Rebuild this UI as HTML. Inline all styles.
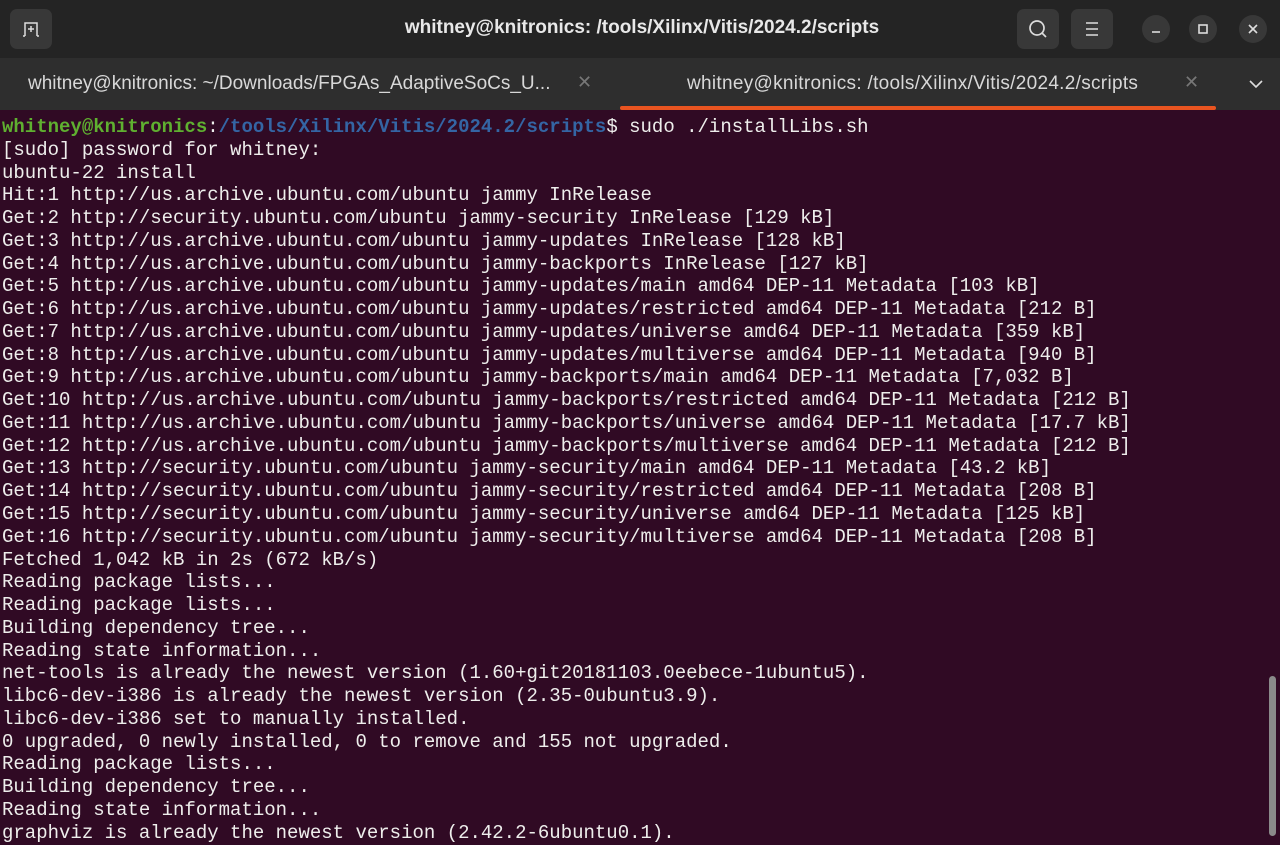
<!DOCTYPE html>
<html><head><meta charset="utf-8"><style>
*{margin:0;padding:0;box-sizing:border-box}
body{width:1280px;height:835px;overflow:hidden;background:#300a24;font-family:"Liberation Sans",sans-serif}
.hdr{position:absolute;left:0;top:0;width:1280px;height:58px;background:#242424}
.title{position:absolute;left:0;width:1284px;top:17px;text-align:center;color:#e8e8e8;font-weight:bold;font-size:19px}
.btn{position:absolute;top:9px;width:42px;height:40px;border-radius:7px;background:#383838}
.circ{position:absolute;top:15px;width:28px;height:28px;border-radius:50%;background:#383838}
.tabs{position:absolute;left:0;top:58px;width:1280px;height:52px;background:#2e2e2e}
.tab{position:absolute;top:15px;color:#d8d8d8;font-size:19px}
.x{position:absolute;top:14px;color:#777;font-size:18px}
.term{position:absolute;left:2px;top:116px;font-family:"Liberation Mono",monospace;font-size:19px;line-height:22.77px;color:#eeeeec;white-space:pre}
.g{font-weight:bold;color:#5fb030}.b{color:#3465a4;font-weight:bold}
</style></head><body>
<div class="hdr">
<div class="btn" style="left:10px"><svg width="42" height="40"><path d="M15 27V14h12v13M15 27h-2M27 27h2M21 17v6M18 20h6" stroke="#ddd" stroke-width="1.5" fill="none"/></svg></div>
<div class="title">whitney@knitronics: /tools/Xilinx/Vitis/2024.2/scripts</div>
<div class="btn" style="left:1017px"><svg width="42" height="40"><circle cx="20" cy="19" r="7" stroke="#ddd" stroke-width="1.7" fill="none"/><path d="M25 24l4 4" stroke="#ddd" stroke-width="1.7"/></svg></div>
<div class="btn" style="left:1071px"><svg width="42" height="40"><path d="M15 14h12M15 20h12M15 26h12" stroke="#ddd" stroke-width="1.6"/></svg></div>
<div class="circ" style="left:1142px"><svg width="28" height="28"><path d="M10 17h8" stroke="#ddd" stroke-width="1.6"/></svg></div>
<div class="circ" style="left:1189px"><svg width="28" height="28"><rect x="10" y="10" width="8" height="8" stroke="#ddd" stroke-width="1.6" fill="none"/></svg></div>
<div class="circ" style="left:1239px"><svg width="28" height="28"><path d="M10 10l8 8M18 10l-8 8" stroke="#ddd" stroke-width="1.6"/></svg></div>
</div>
<div class="tabs">
<div class="tab" style="left:28px">whitney@knitronics: ~/Downloads/FPGAs_AdaptiveSoCs_U...</div>
<div class="x" style="left:577px">✕</div>
<div class="tab" style="left:687px;letter-spacing:0.3px">whitney@knitronics: /tools/Xilinx/Vitis/2024.2/scripts</div>
<div class="x" style="left:1184px">✕</div>
<svg style="position:absolute;left:1248px;top:20px" width="16" height="12"><path d="M2 3l6 6 6-6" stroke="#ddd" stroke-width="1.6" fill="none"/></svg>
<div style="position:absolute;left:620px;top:48px;width:596px;height:4px;background:#e95420;border-radius:2px"></div>
</div>
<div style="position:absolute;left:1269px;top:676px;width:7px;height:160px;background:#8a8a8a;border-radius:4px"></div>
<div class="term"><span class="g">whitney@knitronics</span>:<span class="b">/tools/Xilinx/Vitis/2024.2/scripts</span>$ sudo ./installLibs.sh
[sudo] password for whitney:
ubuntu-22 install
Hit:1 http://us.archive.ubuntu.com/ubuntu jammy InRelease
Get:2 http://security.ubuntu.com/ubuntu jammy-security InRelease [129 kB]
Get:3 http://us.archive.ubuntu.com/ubuntu jammy-updates InRelease [128 kB]
Get:4 http://us.archive.ubuntu.com/ubuntu jammy-backports InRelease [127 kB]
Get:5 http://us.archive.ubuntu.com/ubuntu jammy-updates/main amd64 DEP-11 Metadata [103 kB]
Get:6 http://us.archive.ubuntu.com/ubuntu jammy-updates/restricted amd64 DEP-11 Metadata [212 B]
Get:7 http://us.archive.ubuntu.com/ubuntu jammy-updates/universe amd64 DEP-11 Metadata [359 kB]
Get:8 http://us.archive.ubuntu.com/ubuntu jammy-updates/multiverse amd64 DEP-11 Metadata [940 B]
Get:9 http://us.archive.ubuntu.com/ubuntu jammy-backports/main amd64 DEP-11 Metadata [7,032 B]
Get:10 http://us.archive.ubuntu.com/ubuntu jammy-backports/restricted amd64 DEP-11 Metadata [212 B]
Get:11 http://us.archive.ubuntu.com/ubuntu jammy-backports/universe amd64 DEP-11 Metadata [17.7 kB]
Get:12 http://us.archive.ubuntu.com/ubuntu jammy-backports/multiverse amd64 DEP-11 Metadata [212 B]
Get:13 http://security.ubuntu.com/ubuntu jammy-security/main amd64 DEP-11 Metadata [43.2 kB]
Get:14 http://security.ubuntu.com/ubuntu jammy-security/restricted amd64 DEP-11 Metadata [208 B]
Get:15 http://security.ubuntu.com/ubuntu jammy-security/universe amd64 DEP-11 Metadata [125 kB]
Get:16 http://security.ubuntu.com/ubuntu jammy-security/multiverse amd64 DEP-11 Metadata [208 B]
Fetched 1,042 kB in 2s (672 kB/s)
Reading package lists...
Reading package lists...
Building dependency tree...
Reading state information...
net-tools is already the newest version (1.60+git20181103.0eebece-1ubuntu5).
libc6-dev-i386 is already the newest version (2.35-0ubuntu3.9).
libc6-dev-i386 set to manually installed.
0 upgraded, 0 newly installed, 0 to remove and 155 not upgraded.
Reading package lists...
Building dependency tree...
Reading state information...
graphviz is already the newest version (2.42.2-6ubuntu0.1).</div>
</body></html>
